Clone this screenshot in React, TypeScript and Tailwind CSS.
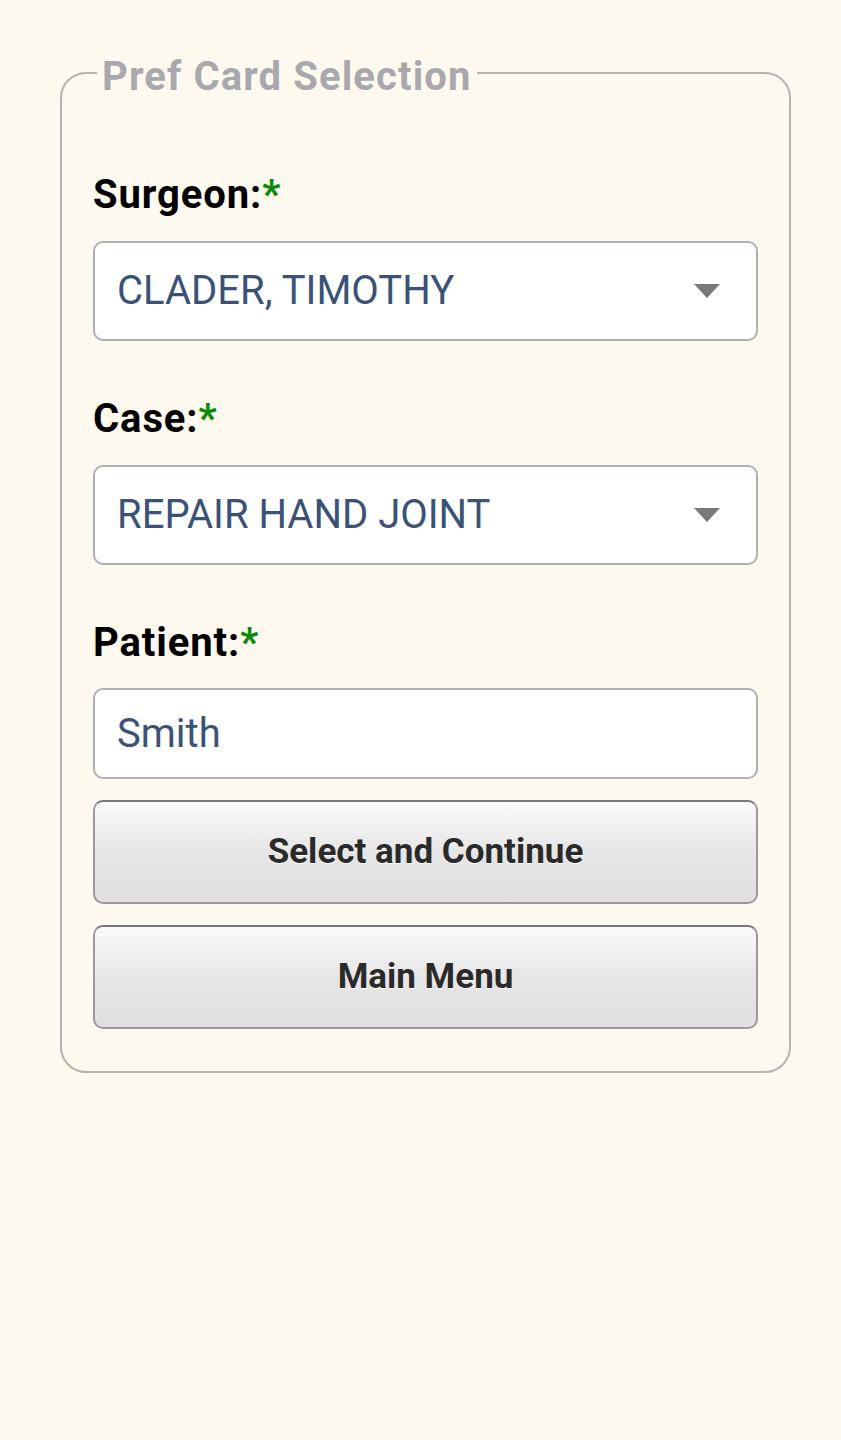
import React from "react";

const Arrow = () => (
  <svg width="26" height="14" viewBox="0 0 26 14" className="shrink-0">
    <path d="M0 0 L26 0 L13 14 Z" fill="#7a7a7a" />
  </svg>
);

const Label = ({ text }: { text: string }) => (
  <div className="text-[40px] leading-[48px] font-bold tracking-[0.9px] text-black">
    {text}
    <span className="text-[#0a8a0a]">*</span>
  </div>
);

const SelectBox = ({ value }: { value: string }) => (
  <div className="mt-[22px] flex h-[100px] items-center justify-between rounded-[10px] border-2 border-[#b0b0b0] bg-white pl-[22px] pr-[36px]">
    <span className="text-[40px] leading-[48px] text-[#3b5278]">{value}</span>
    <Arrow />
  </div>
);

const GelButton = ({ text }: { text: string }) => (
  <button className="flex h-[104px] w-full items-center justify-center rounded-[10px] border-2 border-[#9a9a9a] border-t-[#777] bg-gradient-to-b from-[#fbfbfb] via-[#e6e6e6] via-50% to-[#e0e0e0] text-[35px] font-bold text-[#2a2a2a] [text-shadow:0_1px_0_#fff]">
    {text}
  </button>
);

export default function App() {
  return (
    <div
      className="min-h-[1440px] w-full bg-[#fdf9ee] px-[60px] pt-[45px]"
      style={{ fontFamily: "Roboto, 'Liberation Sans', sans-serif" }}
    >
      <fieldset className="w-[731px] rounded-[26px] border-2 border-[#b4b4b4] px-[31px] pb-[42px]">
        <legend className="ml-[4px] px-[5px] pt-[8px] text-[40px] leading-[48px] font-bold tracking-[1.1px] text-[#a9a9ad]">
          Pref Card Selection
        </legend>
        <div className="pt-[70px]">
          <Label text="Surgeon:" />
          <SelectBox value="CLADER, TIMOTHY" />

          <div className="mt-[54px]">
            <Label text="Case:" />
          </div>
          <SelectBox value="REPAIR HAND JOINT" />

          <div className="mt-[54px]">
            <Label text="Patient:" />
          </div>
          <div className="mt-[21px] flex h-[91px] items-center rounded-[10px] border-2 border-[#b0b0b0] bg-white pl-[22px]">
            <span className="text-[40px] leading-[48px] text-[#3b5278]">Smith</span>
          </div>

          <div className="mt-[21px] flex flex-col gap-[21px]">
            <GelButton text="Select and Continue" />
            <GelButton text="Main Menu" />
          </div>
        </div>
      </fieldset>
    </div>
  );
}
